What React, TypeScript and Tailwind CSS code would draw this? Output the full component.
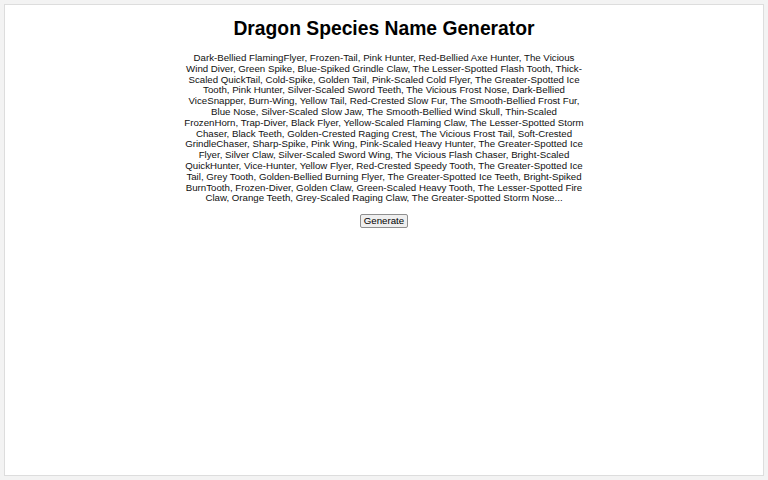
import React from "react";

const names =
  "Dark-Bellied FlamingFlyer, Frozen-Tail, Pink Hunter, Red-Bellied Axe Hunter, The Vicious Wind Diver, Green Spike, Blue-Spiked Grindle Claw, The Lesser-Spotted Flash Tooth, Thick-Scaled QuickTail, Cold-Spike, Golden Tail, Pink-Scaled Cold Flyer, The Greater-Spotted Ice Tooth, Pink Hunter, Silver-Scaled Sword Teeth, The Vicious Frost Nose, Dark-Bellied ViceSnapper, Burn-Wing, Yellow Tail, Red-Crested Slow Fur, The Smooth-Bellied Frost Fur, Blue Nose, Silver-Scaled Slow Jaw, The Smooth-Bellied Wind Skull, Thin-Scaled FrozenHorn, Trap-Diver, Black Flyer, Yellow-Scaled Flaming Claw, The Lesser-Spotted Storm Chaser, Black Teeth, Golden-Crested Raging Crest, The Vicious Frost Tail, Soft-Crested GrindleChaser, Sharp-Spike, Pink Wing, Pink-Scaled Heavy Hunter, The Greater-Spotted Ice Flyer, Silver Claw, Silver-Scaled Sword Wing, The Vicious Flash Chaser, Bright-Scaled QuickHunter, Vice-Hunter, Yellow Flyer, Red-Crested Speedy Tooth, The Greater-Spotted Ice Tail, Grey Tooth, Golden-Bellied Burning Flyer, The Greater-Spotted Ice Teeth, Bright-Spiked BurnTooth, Frozen-Diver, Golden Claw, Green-Scaled Heavy Tooth, The Lesser-Spotted Fire Claw, Orange Teeth, Grey-Scaled Raging Claw, The Greater-Spotted Storm Nose...";

export default function App() {
  return (
    <div
      className="w-[768px] h-[480px] bg-[#f3f3f3] p-[4px]"
      style={{ fontFamily: '"Liberation Sans", Arial, sans-serif' }}
    >
      <div className="h-full bg-white border border-[#dddddd] flex flex-col items-center text-black">
        <h1 className="mt-[12px] text-[19.3px] leading-[23px] font-bold">
          Dragon Species Name Generator
        </h1>
        <p className="mt-[13px] w-[400px] text-center text-[9.7px] leading-[10.8px] text-[#111111]">
          {names}
        </p>
        <button className="mt-[10px] px-[3px] h-[14px] text-[9.7px] leading-none bg-[#efefef] border border-[#8f8f8f] rounded-[2px]">
          Generate
        </button>
      </div>
    </div>
  );
}
